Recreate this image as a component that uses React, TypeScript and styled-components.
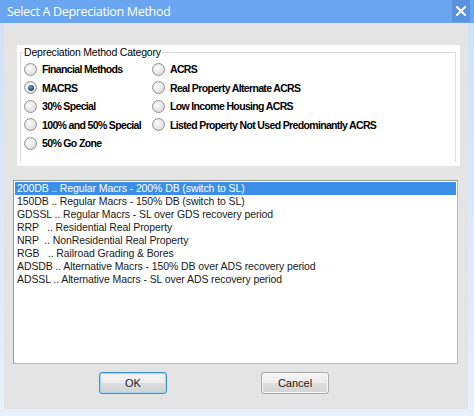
import React, { useState } from "react";
import styled, { createGlobalStyle } from "styled-components";

const Global = createGlobalStyle`
  html, body { margin: 0; padding: 0; background: #ffffff; }
  #root { width: 474px; height: 416px; overflow: hidden; }
`;

const Window = styled.div`
  width: 474px;
  height: 416px;
  box-sizing: border-box;
  display: flex;
  flex-direction: column;
  background: linear-gradient(#cfe0f6, #e8f0fb);
  padding: 0 6px 7px 4px;
  font-family: "Liberation Sans", Arial, sans-serif;
`;

const TitleBar = styled.div`
  height: 23px;
  margin: 0 -6px 0 -4px;
  background: #6aa6f0;
  display: flex;
  align-items: center;
  justify-content: space-between;
  padding: 0 4px 0 7px;
  flex-shrink: 0;
`;

const Title = styled.span`
  font-family: "Open Sans", "Noto Sans", sans-serif;
  font-size: 12.5px;
  color: #ffffff;
  letter-spacing: -0.32px;
  margin-top: -1px;
`;

const CloseButton = styled.div`
  width: 18px;
  height: 22px;
  margin-top: -1px;
  background: #5b92dc;
  display: flex;
  align-items: center;
  justify-content: center;
`;

const Body = styled.div`
  flex: 1;
  background: #e4e4e4;
  display: flex;
  flex-direction: column;
  padding: 22px 10px 0 9px;
`;

const Panel = styled.div`
  background: #ffffff;
  margin-left: 4px;
  margin-right: -2px;
  height: 121px;
  box-sizing: border-box;
  padding: 1px 4px 4px 3px;
  display: flex;
`;

const Group = styled.fieldset`
  flex: 1;
  margin: 0;
  border: 1px solid #dcdcdc;
  border-bottom: none;
  padding: 0 0 0 3px;
  min-width: 0;
`;

const Legend = styled.legend`
  font-size: 10.5px;
  color: #000000;
  padding: 0 1px;
  margin-left: -1px;
  line-height: 12px;
  letter-spacing: -0.2px;
`;

const RadioGrid = styled.div`
  display: grid;
  grid-template-columns: 128px 1fr;
  grid-auto-flow: column;
  grid-template-rows: repeat(5, 18.5px);
  margin-top: 2px;
`;

const RadioRow = styled.label`
  display: flex;
  align-items: center;
  gap: 5px;
  font-size: 10.5px;
  font-weight: bold;
  color: #000000;
  letter-spacing: -0.65px;
  white-space: nowrap;
  cursor: default;
`;

const RadioCircle = styled.span<{ $checked: boolean }>`
  width: 11px;
  height: 11px;
  border-radius: 50%;
  border: 1px solid #8f8f8f;
  background: radial-gradient(circle at 40% 35%, #fbfbfb 0%, #e6e6e6 55%, #cfcfcf 100%);
  display: flex;
  align-items: center;
  justify-content: center;
  flex-shrink: 0;
  &::after {
    content: "";
    display: ${(p) => (p.$checked ? "block" : "none")};
    width: 6px;
    height: 6px;
    border-radius: 50%;
    background: radial-gradient(circle at 40% 35%, #7d9cc0 0%, #34506f 60%, #1f3550 100%);
  }
`;

const ListBox = styled.div`
  margin-top: 14px;
  height: 184px;
  box-sizing: border-box;
  background: #ffffff;
  border: 1px solid #9a9a9a;
  border-right-color: #b8b8b8;
  border-bottom-color: #b8b8b8;
  padding: 1px 1px;
`;

const ListItem = styled.div<{ $selected: boolean }>`
  height: 13px;
  line-height: 13px;
  font-size: 10.5px;
  padding-left: 2px;
  white-space: pre;
  color: ${(p) => (p.$selected ? "#ffffff" : "#1a1a1a")};
  background: ${(p) => (p.$selected ? "#3b8fe9" : "transparent")};
  letter-spacing: -0.1px;
`;

const ButtonRow = styled.div`
  display: flex;
  gap: 94px;
  padding-left: 86px;
  margin-top: 8px;
`;

const Button = styled.button<{ $default?: boolean }>`
  width: 68px;
  height: 22px;
  box-sizing: border-box;
  border-radius: 3px;
  border: 1px solid ${(p) => (p.$default ? "#3a95c4" : "#a9a9a9")};
  box-shadow: ${(p) => (p.$default ? "inset 0 0 0 1px #9fd8f0" : "inset 0 0 0 1px #f6f6f6")};
  background: linear-gradient(#f4f4f4 0%, #ececec 48%, #dedede 52%, #d2d2d2 100%);
  font-family: "Liberation Sans", Arial, sans-serif;
  font-size: 11px;
  color: #1a1a1a;
  padding: 0;
`;

const categories = [
  "Financial Methods",
  "MACRS",
  "30% Special",
  "100% and 50% Special",
  "50% Go Zone",
  "ACRS",
  "Real Property Alternate ACRS",
  "Low Income Housing ACRS",
  "Listed Property Not Used Predominantly ACRS",
];

const methods = [
  "200DB .. Regular Macrs - 200% DB (switch to SL)",
  "150DB .. Regular Macrs - 150% DB (switch to SL)",
  "GDSSL .. Regular Macrs - SL over GDS recovery period",
  "RRP   .. Residential Real Property",
  "NRP  .. NonResidential Real Property",
  "RGB   .. Railroad Grading & Bores",
  "ADSDB .. Alternative Macrs - 150% DB over ADS recovery period",
  "ADSSL .. Alternative Macrs - SL over ADS recovery period",
];

export default function App() {
  const [cat, setCat] = useState(1);
  const [sel, setSel] = useState(0);
  return (
    <>
      <Global />
      <Window>
        <TitleBar>
          <Title>Select A Depreciation Method</Title>
          <CloseButton>
            <svg width="10" height="10" viewBox="0 0 10 10">
              <path d="M1 1 L9 9 M9 1 L1 9" stroke="#ffffff" strokeWidth="2" strokeLinecap="square" />
            </svg>
          </CloseButton>
        </TitleBar>
        <Body>
          <Panel>
            <Group>
              <Legend>Depreciation Method Category</Legend>
              <RadioGrid>
                {categories.map((c, i) => (
                  <RadioRow key={c} onClick={() => setCat(i)}>
                    <RadioCircle $checked={cat === i} />
                    {c}
                  </RadioRow>
                ))}
              </RadioGrid>
            </Group>
          </Panel>
          <ListBox>
            {methods.map((m, i) => (
              <ListItem key={m} $selected={sel === i} onClick={() => setSel(i)}>
                {m}
              </ListItem>
            ))}
          </ListBox>
          <ButtonRow>
            <Button $default>OK</Button>
            <Button>Cancel</Button>
          </ButtonRow>
        </Body>
      </Window>
    </>
  );
}
